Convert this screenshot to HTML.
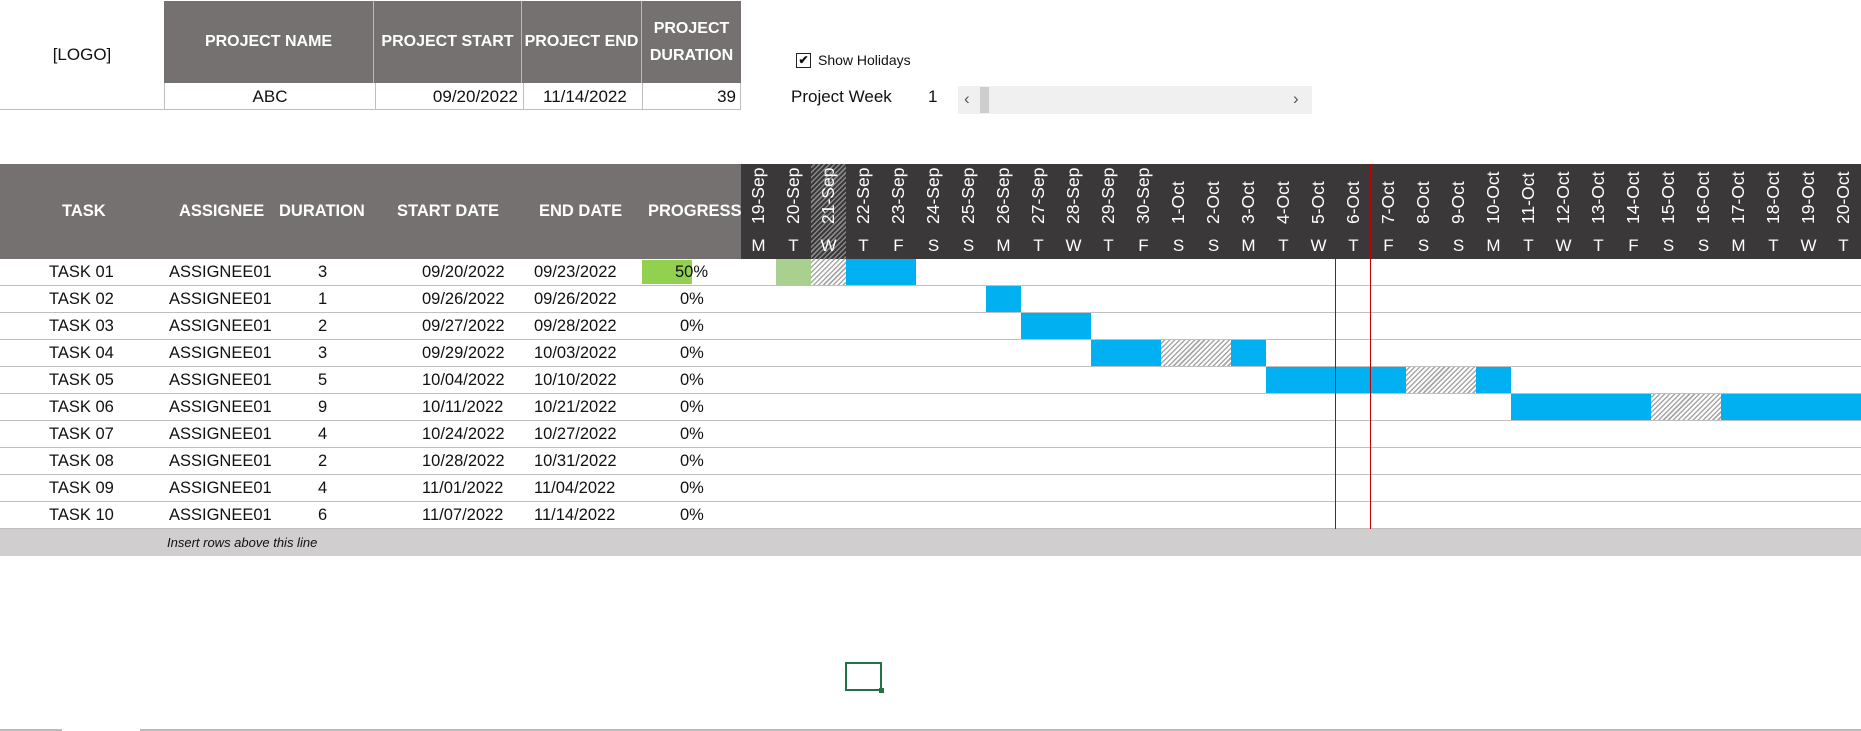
<!DOCTYPE html>
<html><head><meta charset="utf-8"><style>
*{margin:0;padding:0;box-sizing:border-box}
body{width:1861px;height:731px;background:#fff;position:relative;overflow:hidden;font-family:"Liberation Sans",Arial,sans-serif;color:#111}
.a{position:absolute}
.hd{background:#757171;color:#fff;font-weight:bold;font-size:16px}
.c{display:flex;align-items:center;justify-content:center;text-align:center}
.row{position:absolute;left:0;width:1861px;height:27px;border-bottom:1px solid #bfbfbf;font-size:16.5px}
.row span{position:absolute;top:4px}
.g{position:absolute;top:164px;height:95px;width:35px;color:#fff;background:#3a3838}
.g .d{position:absolute;left:0;width:35px;top:0px;height:60px;writing-mode:vertical-rl;transform:rotate(180deg);display:flex;align-items:center;justify-content:flex-start;font-size:17.5px;line-height:35px}
.g .w{position:absolute;left:0;width:35px;top:72px;text-align:center;font-size:17px}
.b{position:absolute;height:27px;background:#00b0f0}
.h{position:absolute;height:27px;background:repeating-linear-gradient(135deg,#fff 0 2px,#a6a6a6 2px 3.5px)}
</style></head><body>
<!-- top table -->
<div class="a c" style="left:0;top:0;width:164px;height:110px;font-size:17px;border-bottom:1px solid #bfbfbf">[LOGO]</div>
<div class="a hd c" style="left:164px;top:1px;width:210px;height:82px;border-right:1px solid #bbb">PROJECT NAME</div>
<div class="a hd c" style="left:374px;top:1px;width:148px;height:82px;border-right:1px solid #bbb">PROJECT START</div>
<div class="a hd c" style="left:522px;top:1px;width:120px;height:82px;border-right:1px solid #bbb">PROJECT END</div>
<div class="a hd c" style="left:642px;top:1px;width:99px;height:82px;line-height:27px">PROJECT<br>DURATION</div>
<div class="a" style="left:164px;top:83px;width:577px;height:27px;border:1px solid #bfbfbf;border-top:none;font-size:17px">
<span class="a" style="left:0;width:210px;text-align:center;top:4px">ABC</span>
<span class="a" style="left:210px;width:210px;height:26px;border-left:1px solid #bfbfbf"></span>
<span class="a" style="right:222px;top:4px">09/20/2022</span>
<span class="a" style="left:358px;width:120px;height:26px;border-left:1px solid #bfbfbf;border-right:1px solid #bfbfbf"></span>
<span class="a" style="left:378px;top:4px">11/14/2022</span>
<span class="a" style="right:4px;top:4px">39</span>
</div>
<!-- controls -->
<div class="a" style="left:796px;top:53px;width:15px;height:15px;border:1px solid #222;font-size:12px;line-height:13px;text-align:center;font-weight:bold">✔</div>
<div class="a" style="left:818px;top:52px;font-size:14px">Show Holidays</div>
<div class="a" style="left:791px;top:87px;font-size:17px">Project Week</div>
<div class="a" style="left:928px;top:87px;font-size:17px">1</div>
<div class="a" style="left:958px;top:86px;width:354px;height:28px;background:#f0f0f0"></div>
<div class="a" style="left:980px;top:87px;width:9px;height:26px;background:#cdcdcd"></div>
<div class="a" style="left:964px;top:89px;font-size:17px;color:#555">‹</div>
<div class="a" style="left:1293px;top:89px;font-size:17px;color:#555">›</div>
<!-- main header -->
<div class="a hd" style="left:0;top:164px;width:741px;height:95px;font-size:16.5px">
<span class="a" style="left:62px;top:38px">TASK</span>
<span class="a" style="left:179px;top:38px">ASSIGNEE</span>
<span class="a" style="left:279px;top:38px">DURATION</span>
<span class="a" style="left:397px;top:38px">START DATE</span>
<span class="a" style="left:539px;top:38px">END DATE</span>
<span class="a" style="left:648px;top:38px">PROGRESS</span>
</div>
<div class="g" style="left:741px"><div class="d">19-Sep</div><div class="w">M</div></div>
<div class="g" style="left:776px"><div class="d">20-Sep</div><div class="w">T</div></div>
<div class="g" style="left:811px;background:repeating-linear-gradient(135deg,#3a3838 0 2px,#8a8a8a 2px 3.5px)"><div class="d">21-Sep</div><div class="w">W</div></div>
<div class="g" style="left:846px"><div class="d">22-Sep</div><div class="w">T</div></div>
<div class="g" style="left:881px"><div class="d">23-Sep</div><div class="w">F</div></div>
<div class="g" style="left:916px"><div class="d">24-Sep</div><div class="w">S</div></div>
<div class="g" style="left:951px"><div class="d">25-Sep</div><div class="w">S</div></div>
<div class="g" style="left:986px"><div class="d">26-Sep</div><div class="w">M</div></div>
<div class="g" style="left:1021px"><div class="d">27-Sep</div><div class="w">T</div></div>
<div class="g" style="left:1056px"><div class="d">28-Sep</div><div class="w">W</div></div>
<div class="g" style="left:1091px"><div class="d">29-Sep</div><div class="w">T</div></div>
<div class="g" style="left:1126px"><div class="d">30-Sep</div><div class="w">F</div></div>
<div class="g" style="left:1161px"><div class="d">1-Oct</div><div class="w">S</div></div>
<div class="g" style="left:1196px"><div class="d">2-Oct</div><div class="w">S</div></div>
<div class="g" style="left:1231px"><div class="d">3-Oct</div><div class="w">M</div></div>
<div class="g" style="left:1266px"><div class="d">4-Oct</div><div class="w">T</div></div>
<div class="g" style="left:1301px"><div class="d">5-Oct</div><div class="w">W</div></div>
<div class="g" style="left:1336px"><div class="d">6-Oct</div><div class="w">T</div></div>
<div class="g" style="left:1371px"><div class="d">7-Oct</div><div class="w">F</div></div>
<div class="g" style="left:1406px"><div class="d">8-Oct</div><div class="w">S</div></div>
<div class="g" style="left:1441px"><div class="d">9-Oct</div><div class="w">S</div></div>
<div class="g" style="left:1476px"><div class="d">10-Oct</div><div class="w">M</div></div>
<div class="g" style="left:1511px"><div class="d">11-Oct</div><div class="w">T</div></div>
<div class="g" style="left:1546px"><div class="d">12-Oct</div><div class="w">W</div></div>
<div class="g" style="left:1581px"><div class="d">13-Oct</div><div class="w">T</div></div>
<div class="g" style="left:1616px"><div class="d">14-Oct</div><div class="w">F</div></div>
<div class="g" style="left:1651px"><div class="d">15-Oct</div><div class="w">S</div></div>
<div class="g" style="left:1686px"><div class="d">16-Oct</div><div class="w">S</div></div>
<div class="g" style="left:1721px"><div class="d">17-Oct</div><div class="w">M</div></div>
<div class="g" style="left:1756px"><div class="d">18-Oct</div><div class="w">T</div></div>
<div class="g" style="left:1791px"><div class="d">19-Oct</div><div class="w">W</div></div>
<div class="g" style="left:1826px"><div class="d">20-Oct</div><div class="w">T</div></div>
<!-- bars -->
<div class="a" style="left:642px;top:260px;width:50px;height:24px;background:#92d050"></div>
<div class="a" style="left:776px;top:259px;width:35px;height:27px;background:#a9d08e"></div>
<div class="h" style="left:811px;top:259px;width:35px"></div>
<div class="b" style="left:846px;top:259px;width:70px"></div>
<div class="b" style="left:986px;top:286px;width:35px"></div>
<div class="b" style="left:1021px;top:313px;width:70px"></div>
<div class="b" style="left:1091px;top:340px;width:70px"></div>
<div class="h" style="left:1161px;top:340px;width:70px"></div>
<div class="b" style="left:1231px;top:340px;width:35px"></div>
<div class="b" style="left:1266px;top:367px;width:140px"></div>
<div class="h" style="left:1406px;top:367px;width:70px"></div>
<div class="b" style="left:1476px;top:367px;width:35px"></div>
<div class="b" style="left:1511px;top:394px;width:140px"></div>
<div class="h" style="left:1651px;top:394px;width:70px"></div>
<div class="b" style="left:1721px;top:394px;width:140px"></div>
<!-- rows -->
<div class="row" style="top:259px"><span style="left:49px">TASK 01</span><span style="left:169px">ASSIGNEE01</span><span style="left:318px">3</span><span style="left:422px">09/20/2022</span><span style="left:534px">09/23/2022</span><span style="left:675px">50%</span></div>
<div class="row" style="top:286px"><span style="left:49px">TASK 02</span><span style="left:169px">ASSIGNEE01</span><span style="left:318px">1</span><span style="left:422px">09/26/2022</span><span style="left:534px">09/26/2022</span><span style="left:680px">0%</span></div>
<div class="row" style="top:313px"><span style="left:49px">TASK 03</span><span style="left:169px">ASSIGNEE01</span><span style="left:318px">2</span><span style="left:422px">09/27/2022</span><span style="left:534px">09/28/2022</span><span style="left:680px">0%</span></div>
<div class="row" style="top:340px"><span style="left:49px">TASK 04</span><span style="left:169px">ASSIGNEE01</span><span style="left:318px">3</span><span style="left:422px">09/29/2022</span><span style="left:534px">10/03/2022</span><span style="left:680px">0%</span></div>
<div class="row" style="top:367px"><span style="left:49px">TASK 05</span><span style="left:169px">ASSIGNEE01</span><span style="left:318px">5</span><span style="left:422px">10/04/2022</span><span style="left:534px">10/10/2022</span><span style="left:680px">0%</span></div>
<div class="row" style="top:394px"><span style="left:49px">TASK 06</span><span style="left:169px">ASSIGNEE01</span><span style="left:318px">9</span><span style="left:422px">10/11/2022</span><span style="left:534px">10/21/2022</span><span style="left:680px">0%</span></div>
<div class="row" style="top:421px"><span style="left:49px">TASK 07</span><span style="left:169px">ASSIGNEE01</span><span style="left:318px">4</span><span style="left:422px">10/24/2022</span><span style="left:534px">10/27/2022</span><span style="left:680px">0%</span></div>
<div class="row" style="top:448px"><span style="left:49px">TASK 08</span><span style="left:169px">ASSIGNEE01</span><span style="left:318px">2</span><span style="left:422px">10/28/2022</span><span style="left:534px">10/31/2022</span><span style="left:680px">0%</span></div>
<div class="row" style="top:475px"><span style="left:49px">TASK 09</span><span style="left:169px">ASSIGNEE01</span><span style="left:318px">4</span><span style="left:422px">11/01/2022</span><span style="left:534px">11/04/2022</span><span style="left:680px">0%</span></div>
<div class="row" style="top:502px"><span style="left:49px">TASK 10</span><span style="left:169px">ASSIGNEE01</span><span style="left:318px">6</span><span style="left:422px">11/07/2022</span><span style="left:534px">11/14/2022</span><span style="left:680px">0%</span></div>
<div class="a" style="left:0;top:529px;width:1861px;height:27px;background:#d0cece"><span class="a" style="left:167px;top:6px;font-size:13px;font-style:italic">Insert rows above this line</span></div>
<!-- today lines -->
<div class="a" style="left:1335px;top:164px;width:1px;height:365px;background:#c00000"></div>
<div class="a" style="left:1370px;top:164px;width:1px;height:365px;background:#c00000"></div>
<!-- selection -->
<div class="a" style="left:845px;top:662px;width:37px;height:29px;border:2px solid #217346"></div>
<div class="a" style="left:879px;top:688px;width:5px;height:5px;background:#217346"></div>
<div class="a" style="left:0;top:729px;width:62px;height:2px;background:#bbb"></div>
<div class="a" style="left:140px;top:729px;width:1721px;height:2px;background:#bbb"></div>
</body></html>
